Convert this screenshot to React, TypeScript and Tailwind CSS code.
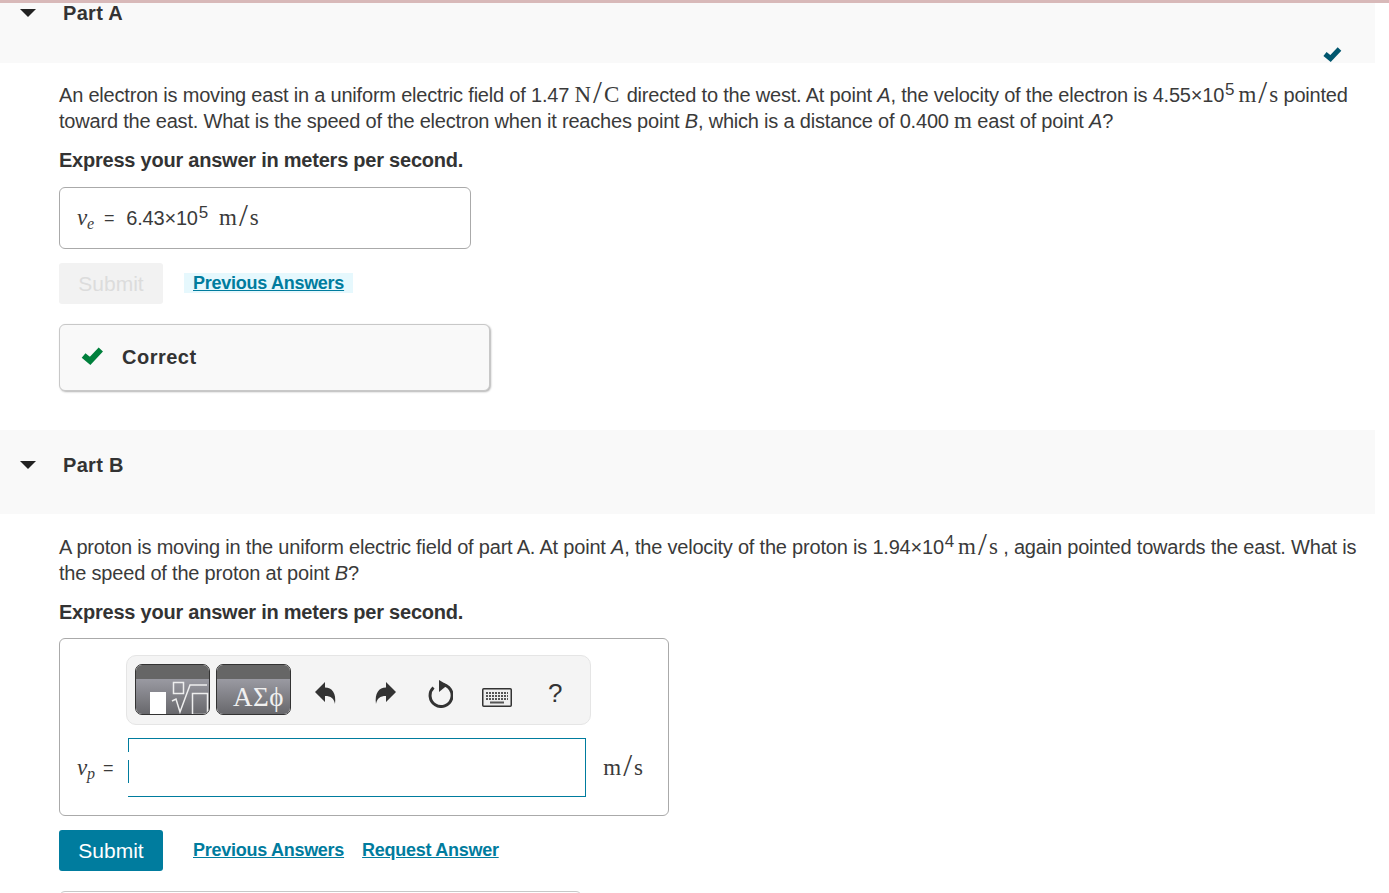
const Caret = () => (
  <svg width="16" height="8" viewBox="0 0 16 8" className="shrink-0">
    <path d="M0 0H16L8 8Z" fill="#222" />
  </svg>
);

const Check = ({ color, className }: { color: string; className: string }) => (
  <svg viewBox="0 0 19 16" className={className}>
    <polyline points="2,8 7.500,12.500 16.500,3" fill="none" stroke={color} strokeWidth="5" />
  </svg>
);

// unit fractions like m/s, the slash is much taller than the letters
const M = ({ a, b, className }: { a: string; b?: string; className?: string }) => (
  <span className={`font-['Liberation_Serif',serif] text-[23px] leading-[0] tracking-normal ${className ?? ''}`}>
    {a}
    {b && (
      <>
        <span className="text-[32px] leading-[0] mx-[2px] relative top-[1px]">/</span>
        {b}
      </>
    )}
  </span>
);

const Sup = ({ children }: { children: React.ReactNode }) => (
  <sup className="text-[17px] leading-[0] relative -top-[7px] align-baseline ml-[1px] mr-[6px]">{children}</sup>
);

const I = ({ children }: { children: React.ReactNode }) => <i>{children}</i>;

const PrevLink = () => (
  <a className="font-bold text-[18px] tracking-[-0.27px] text-[#007c9e] underline">Previous Answers</a>
);

const Undo = ({ flip }: { flip?: boolean }) => (
  <svg width="22" height="24" viewBox="0 0 22 24" className={flip ? '-scale-x-100' : ''}>
    <path d="M0 11L10 1V6.500C17 6.500 21.500 12 20 23C19 17.500 16 15 10 15V21Z" fill="#333" />
  </svg>
);

const Reset = () => (
  <svg width="26" height="28" viewBox="0 0 26 28">
    <path d="M6.500 7.500A11 11 0 1 0 15 4.500" fill="none" stroke="#333" strokeWidth="3" />
    <path d="M12 0V12L20.500 5Z" fill="#333" />
  </svg>
);

const Keyboard = () => (
  <svg width="30" height="19" viewBox="0 0 30 19">
    <rect x="0.75" y="0.75" width="28.500" height="17.500" rx="1" fill="#eee" stroke="#333" strokeWidth="1.500" />
    <path d="M4 5H26M4 8H26M4 11H26" stroke="#555" strokeWidth="2" strokeDasharray="2 1" />
    <path d="M8 14.500H22" stroke="#555" strokeWidth="2" />
  </svg>
);

const TemplateButton = ({ children }: { children: React.ReactNode }) => (
  <div className="w-[75px] h-[51px] mb-[2px] rounded-[7px] border border-[#333] overflow-hidden flex flex-col">
    <div className="h-[14px] bg-[#666] shrink-0" />
    <div className="flex-1 relative bg-[linear-gradient(#9a9aa2,#68686c)]">{children}</div>
  </div>
);

export default function App() {
  return (
    <div className="w-[1389px] h-[893px] overflow-hidden bg-white font-['Liberation_Sans',sans-serif] text-[20px] leading-[26px] text-[#3a3a3a] tracking-[-0.2px]">
      <div className="h-[3px] bg-[#d8b9b9]" />
      <div className="w-[1375px] h-[60px] bg-[#f9f9f9] flex pl-[20px] relative">
        <div className="pt-[6px]"><Caret /></div>
        <div className="ml-[27px] -mt-[3px] font-bold text-[#333] tracking-[0.3px]">Part A</div>
        <Check color="#00566e" className="absolute left-[1323px] top-[43px] w-[19px] h-[16px]" />
      </div>

      <div className="pl-[59px] pr-[14px]">
        <p className="mt-[19px] whitespace-nowrap">
          An electron is moving east in a uniform electric field of 1.47 <M a="N" b="C" className="mr-[2px]" /> directed to the west. At point <I>A</I>, the velocity of the electron is 4.55×10<Sup>5</Sup><M a="m" b="s" className="-ml-[2px]" /> pointed
          <br />
          toward the east. What is the speed of the electron when it reaches point <I>B</I>, which is a distance of 0.400 <M a="m" /> east of point <I>A</I>?
        </p>
        <p className="mt-[13px] font-bold text-[#333] tracking-[-0.23px]">Express your answer in meters per second.</p>

        <div className="mt-[14px] w-[412px] h-[62px] border border-[#aaa] rounded-[6px] flex items-center pl-[17px]">
          <span className="font-['Liberation_Serif',serif] italic text-[23px] w-[21px]">v<sub className="text-[16px] leading-none">e</sub></span>
          <span className="ml-[6px] mr-[12px] text-[18px]">=</span>
          <span>6.43×10<Sup>5</Sup></span>
          <span className="ml-[5px]"><M a="m" b="s" /></span>
        </div>

        <div className="mt-[14px] flex items-center">
          <div className="w-[104px] h-[41px] bg-[#f2f2f2] rounded-[3px] flex items-center justify-center text-[#dcdcdc] text-[21px] tracking-normal">Submit</div>
          <div className="ml-[21px] h-[20px] px-[9px] bg-[#e6f8fd] flex items-center -mt-[2px]"><PrevLink /></div>
        </div>

        <div className="mt-[20px] w-[431px] h-[67px] border border-[#c8c8c8] rounded-[6px] bg-[#f9f9f9] shadow-[1px_1px_2px_rgba(0,0,0,0.3)] flex items-center pl-[21px] pb-[1px]">
          <Check color="#00803c" className="w-[23px] h-[19px] mb-[3px]" />
          <span className="ml-[18px] font-bold text-[#333] tracking-[0.5px]">Correct</span>
        </div>
      </div>

      <div className="mt-[39px] w-[1375px] h-[84px] bg-[#f9f9f9] flex pl-[20px] pt-[22px]">
        <div className="pt-[9px]"><Caret /></div>
        <div className="ml-[27px] font-bold text-[#333] tracking-[0.3px]">Part B</div>
      </div>

      <div className="pl-[59px] pr-[14px]">
        <p className="mt-[20px] whitespace-nowrap">
          A proton is moving in the uniform electric field of part A. At point <I>A</I>, the velocity of the proton is 1.94×10<Sup>4</Sup><M a="m" b="s" className="-ml-[2px]" /> , again pointed towards the east. What is
          <br />
          the speed of the proton at point <I>B</I>?
        </p>
        <p className="mt-[13px] font-bold text-[#333] tracking-[-0.23px]">Express your answer in meters per second.</p>

        <div className="mt-[13px] w-[610px] h-[178px] border border-[#aaa] rounded-[6px] pl-[17px] pt-[16px]">
          <div className="ml-[49px] w-[465px] h-[70px] bg-[#f4f4f4] border border-[#e5e5e5] rounded-[10px] flex items-center pl-[8px]">
            <TemplateButton>
              <div className="absolute left-[14px] bottom-0 w-[16px] h-[22px] bg-white" />
              <svg viewBox="0 0 73 35" className="absolute inset-0 w-[73px] h-[35px]" fill="none" stroke="#eeeeee" strokeWidth="1.500">
                <rect x="37.500" y="3.500" width="10" height="11" />
                <path d="M36 22L40 20L44 33L54 6H71" />
                <rect x="56.500" y="14.500" width="15" height="21" />
              </svg>
            </TemplateButton>
            <div className="w-[6px]" />
            <TemplateButton>
              <span className="absolute left-[16px] top-[3px] text-[27px] leading-[30px] tracking-[0.5px] text-[#f0f0f0] font-['Liberation_Serif',serif]">ΑΣϕ</span>
            </TemplateButton>
            <div className="ml-[24px] mt-[5px]"><Undo /></div>
            <div className="ml-[37px] mt-[5px]"><Undo flip /></div>
            <div className="ml-[31px] mt-[8px]"><Reset /></div>
            <div className="ml-[29px] mt-[14px]"><Keyboard /></div>
            <span className="ml-[36px] mt-[5px] text-[#333] text-[26px] tracking-normal">?</span>
          </div>

          <div className="mt-[13px] flex items-center">
            <span className="font-['Liberation_Serif',serif] italic text-[23px] w-[24px]">v<sub className="text-[16px] leading-none">p</sub></span>
            <span className="ml-[2px] text-[18px]">=</span>
            <div className="ml-[15px] w-[458px] h-[59px] border border-l-0 border-[#007c9e] relative">
              <span className="absolute left-0 top-[-1px] w-[1px] h-[14px] bg-[#007c9e]" />
              <span className="absolute left-0 top-[21px] w-[1px] h-[23px] bg-[#007c9e]" />
            </div>
            <span className="ml-[17px]"><M a="m" b="s" /></span>
          </div>
        </div>

        <div className="mt-[14px] flex items-center">
          <div className="w-[104px] h-[41px] bg-[#007c9e] rounded-[3px] flex items-center justify-center text-white text-[21px] tracking-normal">Submit</div>
          <div className="ml-[30px] flex items-center gap-[18px] -mt-[2px]">
            <PrevLink />
            <a className="font-bold text-[18px] tracking-[-0.27px] text-[#007c9e] underline">Request Answer</a>
          </div>
        </div>

        <div className="mt-[20px] w-[523px] h-[30px] border border-[#c8c8c8] rounded-[6px]" />
      </div>
    </div>
  );
}
